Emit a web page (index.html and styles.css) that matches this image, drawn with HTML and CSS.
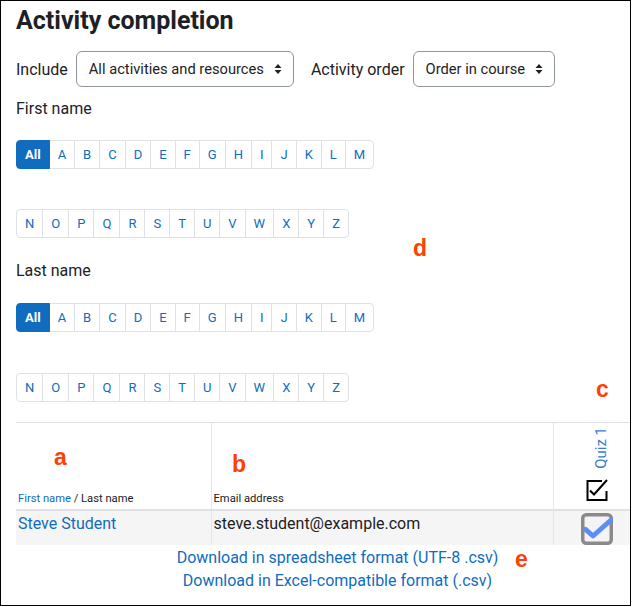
FILE: index.html
```html
<!DOCTYPE html>
<html lang="en">
<head>
<meta charset="utf-8">
<title>Activity completion</title>
<link rel="stylesheet" href="styles.css">
</head>
<body>
<div class="frame">
  <div class="page">
    <h2 class="title">Activity completion</h2>
    <div class="filters">
      <span class="label">Include</span>
      <div class="select">
        <span>All activities and resources</span>
        <svg class="caret" width="8" height="12" viewBox="0 0 8 12"><path d="M0.5 5 L4 1 L7.5 5 Z M0.5 7 L4 11 L7.5 7 Z" fill="#1d2125"/></svg>
      </div>
      <span class="label label-order">Activity order</span>
      <div class="select">
        <span>Order in course</span>
        <svg class="caret" width="8" height="12" viewBox="0 0 8 12"><path d="M0.5 5 L4 1 L7.5 5 Z M0.5 7 L4 11 L7.5 7 Z" fill="#1d2125"/></svg>
      </div>
    </div>

    <div class="group group-first">
      <div class="group-label">First name</div>
      <ul class="bar bar-top">
        <li class="active">All</li><li>A</li><li>B</li><li>C</li><li>D</li><li>E</li><li>F</li><li>G</li><li>H</li><li>I</li><li>J</li><li>K</li><li>L</li><li>M</li>
      </ul>
      <ul class="bar bar-bottom">
        <li>N</li><li>O</li><li>P</li><li>Q</li><li>R</li><li>S</li><li>T</li><li>U</li><li>V</li><li>W</li><li>X</li><li>Y</li><li>Z</li>
      </ul>
    </div>

    <div class="group group-last">
      <div class="group-label">Last name</div>
      <ul class="bar bar-top">
        <li class="active">All</li><li>A</li><li>B</li><li>C</li><li>D</li><li>E</li><li>F</li><li>G</li><li>H</li><li>I</li><li>J</li><li>K</li><li>L</li><li>M</li>
      </ul>
      <ul class="bar bar-bottom">
        <li>N</li><li>O</li><li>P</li><li>Q</li><li>R</li><li>S</li><li>T</li><li>U</li><li>V</li><li>W</li><li>X</li><li>Y</li><li>Z</li>
      </ul>
    </div>

    <table class="grid">
      <colgroup><col class="c1"><col class="c2"><col class="c3"></colgroup>
      <thead>
        <tr>
          <th class="th-name"><a class="link">First name</a> / Last name</th>
          <th class="th-email">Email address</th>
          <th class="th-quiz">
            <div class="quiz-head">
              <span class="quiz-title">Quiz 1</span>
              <svg class="quiz-icon" width="24" height="24" viewBox="0 0 24 24" fill="none" stroke="#000" stroke-width="2"><path d="M17 3 H2.5 V22 H21.5 V13"/><path d="M5 12.5 L9 16.5 L22 2"/></svg>
            </div>
          </th>
        </tr>
      </thead>
      <tbody>
        <tr>
          <td class="td-name"><a class="link">Steve Student</a></td>
          <td class="td-email">steve.student@example.com</td>
          <td class="td-quiz">
            <svg class="done-icon" width="32" height="32" viewBox="0 0 32 32"><rect x="1.75" y="1.75" width="28.5" height="28.5" rx="3.5" fill="#f4f4f4" stroke="#8a8a8a" stroke-width="3.5"/><path d="M4.5 16.3 L12 23 L30 7" fill="none" stroke="#5b8ff5" stroke-width="5" stroke-linecap="round" stroke-linejoin="round"/></svg>
          </td>
        </tr>
      </tbody>
    </table>

    <div class="downloads">
      <a class="link">Download in spreadsheet format (UTF-8 .csv)</a><br>
      <a class="link">Download in Excel-compatible format (.csv)</a>
    </div>
  </div>

  <span class="mark mark-a">a</span>
  <span class="mark mark-b">b</span>
  <span class="mark mark-c">c</span>
  <span class="mark mark-d">d</span>
  <span class="mark mark-e">e</span>
</div>
</body>
</html>
```

FILE: styles.css
```css
* { box-sizing: border-box; }

html, body {
  margin: 0;
  padding: 0;
  background: #fff;
}

body {
  font-family: Roboto, "Liberation Sans", Arial, sans-serif;
  font-size: 16px;
  color: #1d2125;
}

.frame {
  position: relative;
  width: 631px;
  height: 606px;
  border: 1px solid #000;
  overflow: hidden;
}

.page {
  padding-left: 15px;
  width: 680px;
}

.title {
  margin: 4px 0 0;
  font-size: 25px;
  line-height: 31px;
  font-weight: 700;
}

.filters {
  display: flex;
  align-items: center;
  height: 36px;
  margin-top: 15px;
}

.label {
  margin-right: 8px;
}

.label-order {
  margin-left: 17px;
}

.select {
  display: flex;
  align-items: center;
  gap: 10px;
  height: 36px;
  padding: 0 11px 0 12px;
  border: 1px solid #8f959e;
  border-radius: 6px;
  font-size: 14.7px;
}

.caret {
  display: block;
}

.group-label {
  line-height: 22px;
}

.group-first .group-label { margin-top: 11px; }
.group-last .group-label { margin-top: 22px; }

.bar {
  display: flex;
  list-style: none;
  margin: 0;
  padding: 0;
}

.group-first .bar-top { margin-top: 20px; }
.group-first .bar-bottom { margin-top: 40px; }
.group-last .bar-top { margin-top: 21px; }
.group-last .bar-bottom { margin-top: 41px; }

.bar li {
  display: flex;
  align-items: center;
  height: 29px;
  padding: 0 8px;
  margin-left: -1px;
  border: 1px solid #dee2e6;
  color: #0f6cbf;
  font-size: 13px;
}

.bar li:first-child {
  margin-left: 0;
  border-radius: 4px 0 0 4px;
}

.bar li:last-child {
  border-radius: 0 4px 4px 0;
}

.bar li.active {
  position: relative;
  background: #0f6cbf;
  border-color: #0f6cbf;
  color: #fff;
  font-weight: 700;
}

.link {
  color: #0f6cbf;
  text-decoration: none;
}

.grid {
  margin-top: 20px;
  border-collapse: collapse;
  table-layout: fixed;
  width: 625px;
}

.c1 { width: 195px; }
.c2 { width: 342px; }
.c3 { width: 88px; }

.grid th {
  height: 87px;
  padding: 0 2px 2px;
  border-top: 1px solid #dee2e6;
  border-bottom: 2px solid #dee2e6;
  border-left: 1px solid #e6e6e6;
  vertical-align: bottom;
  text-align: left;
  font-size: 11.2px;
  font-weight: 400;
  line-height: 17px;
}

.grid th:first-child,
.grid td:first-child {
  border-left: none;
}

.grid td {
  height: 35px;
  padding: 1px 2px 0;
  border-left: 1px solid #e6e6e6;
  background: #f5f5f5;
  vertical-align: top;
  line-height: 24px;
}

.grid th.th-quiz {
  padding: 0 0 7px 31px;
}

.quiz-head {
  display: flex;
  flex-direction: column;
  align-items: flex-start;
}

.quiz-title {
  writing-mode: vertical-rl;
  transform: rotate(180deg);
  color: #3a7bd0;
  font-size: 15px;
  line-height: 18px;
  margin-left: 7px;
}

.quiz-icon {
  display: block;
  margin-top: 9px;
}

.grid td.td-quiz {
  padding: 2px 0 0 27px;
}

.done-icon {
  display: block;
}

.downloads {
  width: 643px;
  padding-top: 1px;
  text-align: center;
  line-height: 23.5px;
}

.mark {
  position: absolute;
  font-family: "Liberation Sans", Arial, sans-serif;
  font-weight: 700;
  font-size: 23px;
  line-height: 23px;
  color: #ff4000;
}

.mark-a { left: 53px; top: 445px; }
.mark-b { left: 231px; top: 452px; }
.mark-c { left: 595px; top: 377px; }
.mark-d { left: 412px; top: 236px; }
.mark-e { left: 514px; top: 547px; }
```
